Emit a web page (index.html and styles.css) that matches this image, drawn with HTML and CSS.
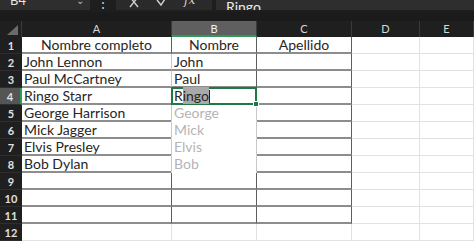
FILE: index.html
```html
<!DOCTYPE html>
<html lang="es">
<head>
    <meta charset="UTF-8">
    <meta name="viewport" content="width=device-width, initial-scale=1.0">
    <title>Relleno rápido</title>
    <link rel="stylesheet" href="styles.css">
</head>
<body>
    <div class="formula-bar">
        <div class="name-box"><span>B4</span><span class="caret">&#8964;</span></div>
        <div class="dots">&#8942;</div>
        <div class="bar-icons">
            <svg width="12" height="12" viewBox="0 0 12 12"><path d="M2 -3 L10 7 M10 -3 L2 7" stroke="#d0d0d0" stroke-width="1.4" fill="none"/></svg>
            <svg width="12" height="12" viewBox="0 0 12 12"><path d="M1 0 L5 5 L11 -4" stroke="#d0d0d0" stroke-width="1.4" fill="none"/></svg>
            <span class="fx">fx</span>
        </div>
        <div class="formula-input">Ringo</div>
    </div>
    <div class="strip"></div>

    <div class="sheet" id="sheet">
        <div class="corner"><span class="tri"></span></div>
        <div class="col-head">A</div>
        <div class="col-head selected">B</div>
        <div class="col-head">C</div>
        <div class="col-head">D</div>
        <div class="col-head">E</div>
    </div>

    <script>
        // Column A: full names, Column B: first names (4 onwards is flash fill preview)
        const fullNames = ['Nombre completo', 'John Lennon', 'Paul McCartney', 'Ringo Starr',
            'George Harrison', 'Mick Jagger', 'Elvis Presley', 'Bob Dylan', '', '', '', ''];
        const firstNames = ['Nombre', 'John', 'Paul', 'Ringo', 'George', 'Mick', 'Elvis', 'Bob', '', '', '', ''];

        const sheet = document.getElementById('sheet');

        for (let i = 0; i < 12; i++) {
            const row = i + 1;
            const inTable = row <= 11;
            const preview = row >= 5 && row <= 8;

            addCell('row-head' + (row === 4 ? ' selected' : ''), row);
            addCell('cell a' + (inTable ? ' t' : '') + (row === 1 ? ' title' : '') + (preview || (row > 1 && row < 5) ? ' soft' : ''), fullNames[i]);

            if (row === 4) {
                addCell('cell b t active', '<span class="typed">R</span><span class="hl">ingo</span><span class="cursor"></span>');
            } else {
                addCell('cell b' + (inTable ? ' t' : '') + (row === 1 ? ' title' : '') + (preview ? ' ghost' : ''), firstNames[i]);
            }

            addCell('cell c' + (inTable ? ' t' : '') + (row === 1 ? ' title' : ''), row === 1 ? 'Apellido' : '');
            addCell('cell', '');
            addCell('cell', '');
        }

        function addCell(cls, html) {
            const div = document.createElement('div');
            div.className = cls;
            div.innerHTML = html;
            sheet.appendChild(div);
        }
    </script>
</body>
</html>
```

FILE: styles.css
```css
body {
    margin: 0;
    width: 474px;
    height: 244px;
    overflow: hidden;
    background: #ffffff;
    font-family: 'Lato', 'Open Sans', sans-serif;
}
.formula-bar {
    display: flex;
    height: 12px;
    background: #1e1e1e;
    color: #e6e6e6;
    overflow: hidden;
}
.name-box {
    width: 90px;
    height: 10px;
    background: #2e2e2e;
    display: flex;
    justify-content: space-between;
    padding: 0 6px 0 10px;
    box-sizing: border-box;
    font-size: 13px;
    line-height: 14px;
}
.name-box span {
    margin-top: -7px;
}
.name-box .caret {
    font-size: 10px;
    color: #bbbbbb;
}
.dots {
    width: 26px;
    text-align: center;
    font-size: 14px;
    line-height: 14px;
    margin-top: -4px;
    color: #cccccc;
}
.bar-icons {
    width: 96px;
    height: 10px;
    background: #2a2a2a;
    display: flex;
    align-items: flex-start;
    gap: 16px;
    padding-left: 12px;
    box-sizing: border-box;
}
.bar-icons svg {
    display: block;
}
.fx {
    font-family: 'DejaVu Serif', serif;
    font-style: italic;
    font-size: 12px;
    line-height: 14px;
    margin-top: -7px;
    color: #d0d0d0;
}
.formula-input {
    flex: 1;
    height: 10px;
    background: #2e2e2e;
    margin-left: 4px;
    padding-left: 10px;
    font-size: 14px;
    line-height: 14px;
    color: #ececec;
    overflow: hidden;
}
.strip {
    height: 9px;
    background: #1b1b1b;
}

.sheet {
    display: grid;
    grid-template-columns: 22px 150px 85px 95px 68px 54px;
    grid-template-rows: 16px repeat(12, 17px);
}
.corner {
    background: #1f1f1f;
    border-right: 1px solid #3a3a3a;
    position: relative;
}
.tri {
    position: absolute;
    right: 3px;
    bottom: 2px;
    width: 0;
    height: 0;
    border-left: 11px solid transparent;
    border-bottom: 10px solid #6b6b6b;
}
.col-head {
    background: #1f1f1f;
    color: #d8d8d8;
    font-size: 11px;
    line-height: 16px;
    text-align: center;
    border-right: 1px solid #3a3a3a;
    box-sizing: border-box;
}
.col-head.selected {
    background: #5f5f5f;
    border-bottom: 2px solid #2e9a5a;
    line-height: 15px;
    color: #f0f0f0;
}
.row-head {
    background: #1f1f1f;
    color: #e0e0e0;
    font-size: 11px;
    font-weight: bold;
    line-height: 17px;
    text-align: center;
    border-bottom: 1px solid #2e2e2e;
    box-sizing: border-box;
}
.row-head.selected {
    background: #555555;
    border-right: 2px solid #2e9a5a;
}
.cell {
    background: #ffffff;
    border-right: 1px solid #e2e2e2;
    border-bottom: 1px solid #e2e2e2;
    box-sizing: border-box;
    font-size: 14px;
    line-height: 16px;
    color: #262626;
    padding-left: 2px;
    white-space: nowrap;
    overflow: hidden;
}
.cell.t {
    border-bottom: 2px solid #8d8d8d;
    border-right: 1px solid #5e5e5e;
    line-height: 15px;
}
.cell.a.soft {
    border-right-color: #c8c8c8;
}
.cell.title {
    text-align: center;
    padding-left: 0;
}
.cell.b.ghost {
    color: #b4b4b4;
    border-bottom: 1px solid #ffffff;
    border-right: 1px solid #c8c8c8;
    border-left: 1px solid #c8c8c8;
    margin-left: -1px;
    padding-left: 2px;
}
.cell.b.active {
    border: 2px solid #1e7a45;
    margin: -1px 0 0 -1px;
    padding-left: 1px;
    line-height: 13px;
    position: relative;
    overflow: visible;
}
.cell.b.active::after {
    content: "";
    position: absolute;
    right: -4px;
    bottom: -4px;
    width: 4px;
    height: 4px;
    background: #1e7a45;
    border: 1px solid #ffffff;
}
.hl {
    background: #a9a9a9;
}
.cursor {
    display: inline-block;
    width: 1px;
    height: 13px;
    background: #222222;
    vertical-align: -2px;
}
```
